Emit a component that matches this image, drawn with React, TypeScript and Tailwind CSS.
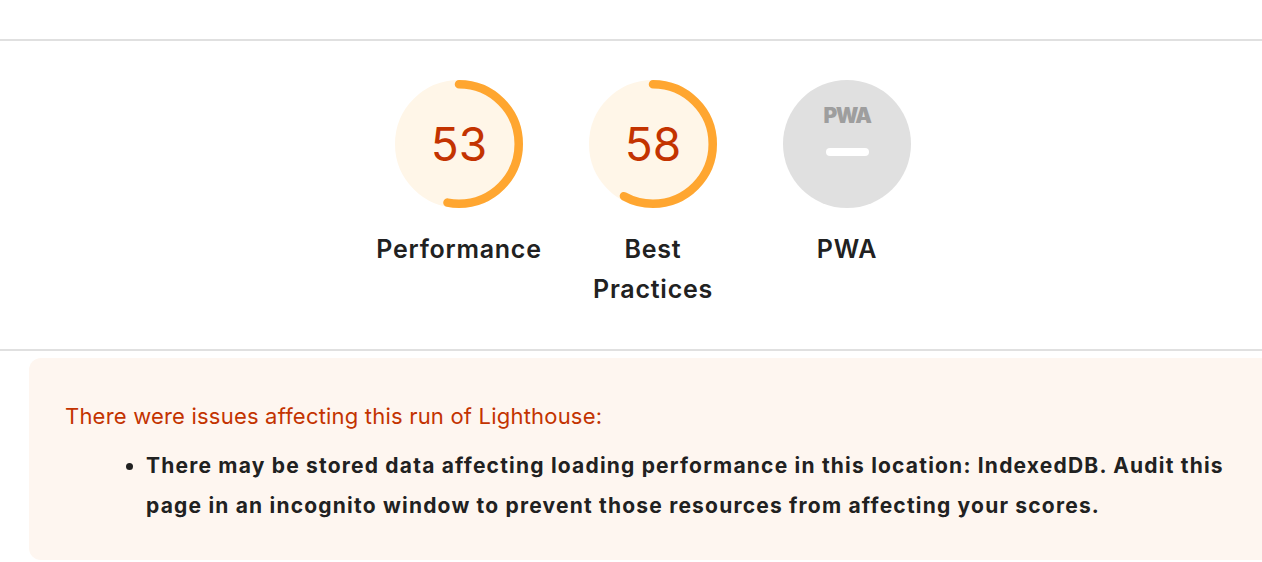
import React from 'react'

type Gauge = { label: React.ReactNode; score: number }

const gauges: Gauge[] = [
  { label: 'Performance', score: 53 },
  { label: <>Best<br />Practices</>, score: 58 },
]

function ScoreGauge({ score }: { score: number }) {
  const r = 56
  const c = 2 * Math.PI * r
  return (
    <div className="relative w-[128px] h-[128px]">
      <svg viewBox="0 0 120 120" className="w-full h-full">
        <circle cx="60" cy="60" r="56" fill="#fff6e8" stroke="#fff6e8" strokeWidth="8" />
        <circle
          cx="60"
          cy="60"
          r={r}
          fill="none"
          stroke="#ffa630"
          strokeWidth="8"
          strokeLinecap="round"
          strokeDasharray={`${(score / 100) * c} ${c}`}
          transform="rotate(-90 60 60)"
        />
      </svg>
      <div className="absolute inset-0 flex items-center justify-center text-[46px] text-[#c33300] leading-none">
        {score}
      </div>
    </div>
  )
}

function PwaGauge() {
  return (
    <div className="w-[128px] h-[128px] rounded-full bg-[#e0e0e0] flex flex-col items-center pt-[27px]">
      <span className="text-[21px] leading-[18px] font-black tracking-[-1.5px] text-[#9e9e9e]">PWA</span>
      <div className="mt-[23px] w-[43px] h-[8px] rounded-full bg-white" />
    </div>
  )
}

export default function App() {
  return (
    <div className="w-[1262px] h-[562px] overflow-hidden bg-white text-[#212121]" style={{ fontFamily: 'Inter, "Liberation Sans", Arial, sans-serif' }}>
      <div className="h-[39px]" />
      <div className="h-[2px] bg-[#e0e0e0]" />

      {/* gauges */}
      <div className="flex justify-center pl-[44px] pt-[39px] h-[308px]">
        {gauges.map((g, i) => (
          <div key={i} className="w-[194px] flex flex-col items-center">
            <ScoreGauge score={g.score} />
            <div className="mt-[21px] text-[25px] leading-[40px] font-semibold tracking-[0.75px] text-center whitespace-nowrap">{g.label}</div>
          </div>
        ))}
        <div className="w-[194px] flex flex-col items-center">
          <PwaGauge />
          <div className="mt-[21px] text-[25px] leading-[40px] font-semibold tracking-[0.75px] text-center">PWA</div>
        </div>
      </div>

      <div className="h-[2px] bg-[#e0e0e0]" />

      {/* warnings */}
      <div className="mt-[7px] ml-[29px] w-[1260px] h-[202px] rounded-[12px] bg-[#fef6f0] pl-[36px] pt-[44px]">
        <p className="text-[22px] leading-[28px] tracking-[0.2px] text-[#c33300]">There were issues affecting this run of Lighthouse:</p>
        <ul className="mt-[16px] list-disc pl-[81px] text-[21px] leading-[40px] font-bold tracking-[1.2px] text-[#212121] w-[1225px]">
          <li className="whitespace-nowrap">
            There may be stored data affecting loading performance in this location: IndexedDB. Audit this
            <br />
            page in an incognito window to prevent those resources from affecting your scores.
          </li>
        </ul>
      </div>
    </div>
  )
}
